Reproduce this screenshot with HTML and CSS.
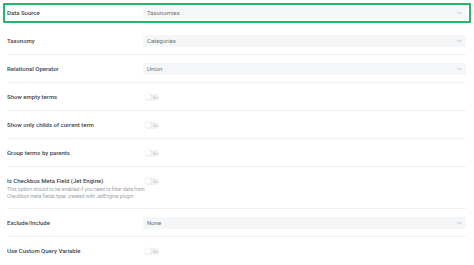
FILE: index.html
```html
<!DOCTYPE html>
<html lang="en">
<head>
  <meta charset="UTF-8">
  <title>Filter Settings</title>
  <link rel="stylesheet" href="styles.css">
</head>
<body>
  <div class="panel">
    <!-- Active control -->
    <div class="row row-active">
      <div class="label">Data Source</div>
      <div class="control">
        <div class="select">Taxonomies
          <svg class="chevron" viewBox="0 0 8 5"><path d="M1 1l3 3 3-3" fill="none" stroke="#9aa0a6" stroke-width="1"/></svg>
        </div>
      </div>
    </div>

    <div class="row">
      <div class="label">Taxonomy</div>
      <div class="control">
        <div class="select">Categories
          <svg class="chevron" viewBox="0 0 8 5"><path d="M1 1l3 3 3-3" fill="none" stroke="#9aa0a6" stroke-width="1"/></svg>
        </div>
      </div>
    </div>

    <div class="row">
      <div class="label">Relational Operator</div>
      <div class="control">
        <div class="select">Union
          <svg class="chevron" viewBox="0 0 8 5"><path d="M1 1l3 3 3-3" fill="none" stroke="#9aa0a6" stroke-width="1"/></svg>
        </div>
      </div>
    </div>

    <div class="row">
      <div class="label">Show empty terms</div>
      <div class="control"><span class="switch"><span class="knob"></span><span class="switch-text">No</span></span></div>
    </div>

    <div class="row">
      <div class="label">Show only childs of current term</div>
      <div class="control"><span class="switch"><span class="knob"></span><span class="switch-text">No</span></span></div>
    </div>

    <div class="row">
      <div class="label">Group terms by parents</div>
      <div class="control"><span class="switch"><span class="knob"></span><span class="switch-text">No</span></span></div>
    </div>

    <div class="row row-top">
      <div class="label">
        Is Checkbox Meta Field (Jet Engine)
        <p class="desc">This option should to be enabled if you need to filter data from<br>Checkbox meta fields type, created with JetEngine plugin</p>
      </div>
      <div class="control"><span class="switch"><span class="knob"></span><span class="switch-text">No</span></span></div>
    </div>

    <div class="row">
      <div class="label">Exclude/Include</div>
      <div class="control">
        <div class="select">None
          <svg class="chevron" viewBox="0 0 8 5"><path d="M1 1l3 3 3-3" fill="none" stroke="#9aa0a6" stroke-width="1"/></svg>
        </div>
      </div>
    </div>

    <div class="row row-last">
      <div class="label">Use Custom Query Variable</div>
      <div class="control"><span class="switch"><span class="knob"></span><span class="switch-text">No</span></span></div>
    </div>
  </div>
</body>
</html>
```

FILE: styles.css
```css
body {
  margin: 0;
  background: #fff;
  font-family: Roboto, "Liberation Sans", sans-serif;
  font-size: 6px;
  color: #3f444b;
}

.panel {
  padding: 3px 8px 0 7px;
}

.row {
  display: flex;
  align-items: center;
  padding: 8px 0 7px;
  border-bottom: 1px solid #eef0f2;
}

.row-active {
  margin: 0 -5px 4px -4px;
  padding: 2px 3px 2px 2px;
  border: 2px solid #26b56a;
  border-radius: 1px;
}

.row-top {
  align-items: flex-start;
  padding: 10px 0 8px;
}

.row-last {
  border-bottom: none;
}

.label {
  width: 136px;
  flex-shrink: 0;
  font-weight: 500;
  line-height: 8px;
}

.desc {
  margin: 1px 0 0;
  white-space: nowrap;
  font-size: 5px;
  font-weight: 400;
  line-height: 7px;
  color: #9ca1a7;
}

.control {
  flex: 1;
  display: flex;
  align-items: center;
  min-height: 12px;
}

.row-top .control {
  min-height: 8px;
}

.select {
  position: relative;
  flex: 1;
  height: 12px;
  line-height: 12px;
  padding-left: 4px;
  background: #f5f6f8;
  color: #6b737b;
  border-radius: 1px;
}

.chevron {
  position: absolute;
  right: 4px;
  top: 4px;
  width: 5px;
  height: 4px;
}

.switch {
  display: inline-flex;
  align-items: center;
  width: 14px;
  height: 7px;
  margin-left: 2px;
  border-radius: 4px;
  background: #f1f2f4;
}

.knob {
  width: 6px;
  height: 6px;
  border-radius: 50%;
  background: #fff;
  box-shadow: 0 0 1px rgba(0, 0, 0, 0.25);
}

.switch-text {
  margin-left: 2px;
  font-size: 4px;
  color: #c3c7cb;
}
```
